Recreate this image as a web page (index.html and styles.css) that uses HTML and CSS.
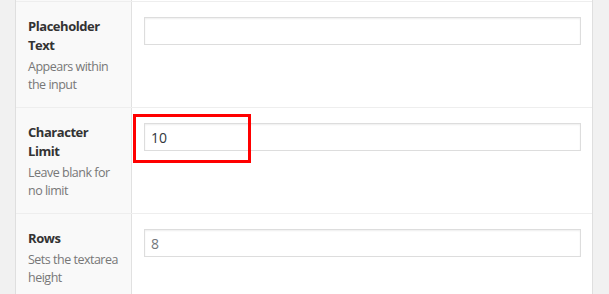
FILE: index.html
```html
<!DOCTYPE html>
<html>
<head>
<meta charset="utf-8">
<link rel="stylesheet" href="styles.css">
</head>
<body>
<div class="panel">
  <div class="row stub">
    <div class="label"></div>
    <div class="input-cell"></div>
  </div>
  <div class="row">
    <div class="label">
      <label>Placeholder Text</label>
      <p class="description">Appears within the input</p>
    </div>
    <div class="input-cell">
      <input type="text" class="field" value="">
    </div>
  </div>
  <div class="row">
    <div class="label">
      <label>Character Limit</label>
      <p class="description">Leave blank for no limit</p>
    </div>
    <div class="input-cell">
      <input type="text" class="field" value="10">
      <div class="highlight"></div>
    </div>
  </div>
  <div class="row">
    <div class="label">
      <label>Rows</label>
      <p class="description">Sets the textarea height</p>
    </div>
    <div class="input-cell">
      <input type="text" class="field" placeholder="8">
    </div>
  </div>
</div>
</body>
</html>
```

FILE: styles.css
```css
html, body {
  margin: 0;
  padding: 0;
  background: #f1f1f1;
  height: 100%;
  overflow: hidden;
}
body {
  font-family: "Open Sans", "Noto Sans", sans-serif;
  font-size: 13px;
  line-height: 1.4em;
  color: #444;
}
.panel {
  margin-left: 15px;
  width: 578px;
  box-sizing: border-box;
  border-left: 1px solid #dfdfdf;
  border-right: 1px solid #dfdfdf;
  background: #fff;
  min-height: 100%;
  display: flex;
  flex-direction: column;
}
.row {
  display: flex;
  border-top: 1px solid #eeeeee;
  height: 105px;
}
.row:last-child {
  flex: 1;
}
.row.stub {
  height: 1px;
  border-top: 0;
}
.label {
  width: 116px;
  flex: none;
  box-sizing: border-box;
  background: #f9f9f9;
  border-right: 1px solid #e1e1e1;
  padding: 15px 12px;
}
.label label {
  display: block;
  font-weight: 700;
  font-size: 13px;
  color: #333;
  margin: 0 0 3px;
  letter-spacing: -0.45px;
  line-height: 19px;
}
.label .description {
  margin: 0;
  color: #777;
  font-size: 12.5px;
  letter-spacing: -0.5px;
  line-height: 17.5px;
}
.input-cell {
  flex: 1;
  position: relative;
  padding: 15px 11px 15px 12px;
}
.field {
  display: block;
  width: 100%;
  height: 28px;
  box-sizing: border-box;
  margin: 0;
  padding: 3px 6px;
  border: 1px solid #ddd;
  border-radius: 0;
  box-shadow: inset 0 1px 2px rgba(0,0,0,.07);
  background: #fff;
  font-family: "Open Sans", "Noto Sans", sans-serif;
  font-size: 14px;
  color: #32373c;
  outline: none;
}
.field::placeholder {
  color: #72777c;
  opacity: 1;
}
.highlight {
  position: absolute;
  left: 1px;
  top: 6px;
  width: 118px;
  height: 49px;
  box-sizing: border-box;
  border: 3px solid #ff0000;
}
```
